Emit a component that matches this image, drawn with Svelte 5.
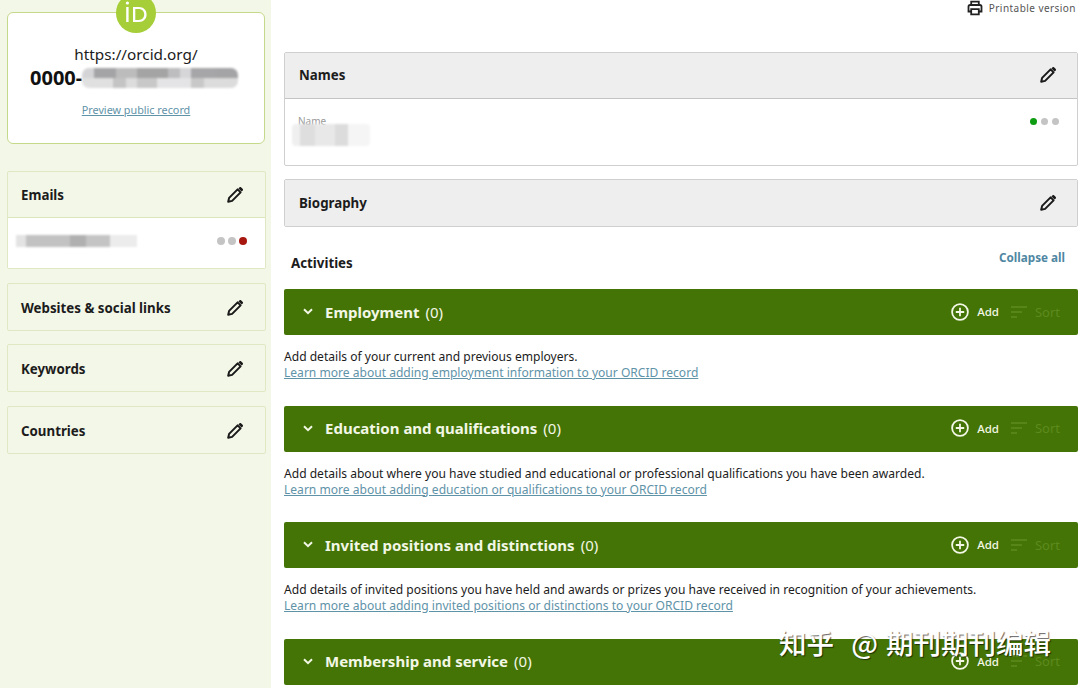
<script>
    const sideCards = ["Websites & social links", "Keywords", "Countries"];
    const sections = [
        {
            title: "Employment",
            text: "Add details of your current and previous employers.",
            link: "Learn more about adding employment information to your ORCID record",
        },
        {
            title: "Education and qualifications",
            text: "Add details about where you have studied and educational or professional qualifications you have been awarded.",
            link: "Learn more about adding education or qualifications to your ORCID record",
        },
        {
            title: "Invited positions and distinctions",
            text: "Add details of invited positions you have held and awards or prizes you have received in recognition of your achievements.",
            link: "Learn more about adding invited positions or distinctions to your ORCID record",
        },
        { title: "Membership and service" },
    ];
</script>

{#snippet pencil()}
    <svg class="pencil" viewBox="0 0 18 18" width="18" height="18" aria-hidden="true">
        <path d="M2.2 15.8l.9-3.9L11.6 3.4l3 3-8.5 8.5z" fill="none" stroke="#1a1a1a" stroke-width="2" stroke-linejoin="round" />
        <path d="M12.4 2.4l1.2-1.2c.4-.4 1-.4 1.4 0l1.8 1.8c.4.4.4 1 0 1.4l-1.2 1.2z" fill="#1a1a1a" />
    </svg>
{/snippet}

<div class="page">
    <aside class="sidebar">
        <div class="id-card">
            <svg class="id-logo" viewBox="0 0 40 40" width="40" height="40" aria-hidden="true">
                <circle cx="20" cy="20" r="20" fill="#a6ce39" />
                <rect x="10.2" y="14" width="2.4" height="15" fill="#fff" />
                <circle cx="11.4" cy="10" r="1.6" fill="#fff" />
                <path d="M17 14h5.8c4.9 0 7.8 3.3 7.8 7.5s-3 7.5-7.8 7.5H17zM19.3 16.1v10.8h3.4c3.6 0 5.5-2.5 5.5-5.4s-1.9-5.4-5.5-5.4z" fill="#fff" />
            </svg>
            <div class="id-url">https://orcid.org/</div>
            <div class="id-number">0000-<span class="blur-id"></span></div>
            <a class="preview" href="#preview">Preview public record</a>
        </div>

        <div class="side-card emails">
            <div class="side-head">
                <span>Emails</span>
                {@render pencil()}
            </div>
            <div class="side-body">
                <span class="blur-email"></span>
                <span class="dots">
                    <i></i><i></i><i class="red"></i>
                </span>
            </div>
        </div>

        {#each sideCards as card}
            <div class="side-card">
                <div class="side-head">
                    <span>{card}</span>
                    {@render pencil()}
                </div>
            </div>
        {/each}
    </aside>

    <main class="content">
        <div class="print-row">
            <svg viewBox="0 0 16 16" width="16" height="16" aria-hidden="true">
                <path d="M4.2 5V1.6h7.6V5M4 11.5H1.5V6.6c0-.9.7-1.6 1.6-1.6h9.8c.9 0 1.6.7 1.6 1.6v4.9H12M4.2 9.2h7.6v5.2H4.2z" fill="none" stroke="#222" stroke-width="1.8" />
            </svg>
            <span>Printable version</span>
        </div>

        <section class="panel names">
            <div class="panel-head">
                <span>Names</span>
                {@render pencil()}
            </div>
            <div class="panel-body">
                <div class="name-col">
                    <span class="name-label">Name</span>
                    <span class="blur-name"></span>
                </div>
                <span class="dots small">
                    <i class="green"></i><i></i><i></i>
                </span>
            </div>
        </section>

        <section class="panel">
            <div class="panel-head">
                <span>Biography</span>
                {@render pencil()}
            </div>
        </section>

        <div class="activities">
            <span class="act-title">Activities</span>
            <a class="collapse" href="#collapse">Collapse all</a>
        </div>

        {#each sections as s}
            <section class="activity">
                <div class="bar">
                    <svg class="chev" viewBox="0 0 10 7" width="10" height="7" aria-hidden="true">
                        <path d="M1 1.2l4 4 4-4" fill="none" stroke="#f2f7e6" stroke-width="2" />
                    </svg>
                    <span class="bar-title">{s.title}</span>
                    <span class="bar-count">(0)</span>
                    <span class="bar-actions">
                        <svg viewBox="0 0 18 18" width="18" height="18" aria-hidden="true">
                            <circle cx="9" cy="9" r="7.9" fill="none" stroke="#f2f7e6" stroke-width="1.8" />
                            <path d="M9 4.8v8.4M4.8 9h8.4" stroke="#f2f7e6" stroke-width="1.8" />
                        </svg>
                        <span class="add">Add</span>
                        <svg class="sort-icon" viewBox="0 0 16 12" width="16" height="12" aria-hidden="true">
                            <path d="M0 1h16M0 6h11M0 11h6" stroke="#5d8a1f" stroke-width="1.5" />
                        </svg>
                        <span class="sort">Sort</span>
                    </span>
                </div>
                {#if s.text}
                    <div class="notes">
                        <p>{s.text}</p>
                        <a href="#learn">{s.link}</a>
                    </div>
                {/if}
            </section>
        {/each}
    </main>

    <div class="watermark">知乎 <span class="at">@</span>期刊期刊编辑</div>
</div>

<style>
    :global(body) {
        margin: 0;
        background: #fff;
    }
    .page {
        position: relative;
        display: flex;
        width: 1080px;
        height: 688px;
        overflow: hidden;
        font-family: "Noto Sans", sans-serif;
        color: #1c1c1c;
    }
    .sidebar {
        width: 271px;
        flex: none;
        box-sizing: border-box;
        padding: 12px 5px 0 7px;
        background: #f3f7e7;
    }
    .id-card {
        position: relative;
        box-sizing: border-box;
        width: 258px;
        height: 132px;
        margin-bottom: 27px;
        padding-top: 31px;
        background: #fff;
        border: 1px solid #c5d98b;
        border-radius: 6px;
        text-align: center;
    }
    .id-logo {
        position: absolute;
        left: 108px;
        top: -20px;
    }
    .id-url {
        font-size: 15.3px;
        line-height: 20px;
    }
    .id-number {
        display: flex;
        align-items: center;
        margin: 0 0 0 22px;
        font-size: 20px;
        line-height: 27px;
        font-weight: 700;
        color: #111;
    }
    .blur-id {
        width: 156px;
        height: 20px;
        border-radius: 7px;
        background:
            linear-gradient(90deg, #d4d4d6 0 8%, #a4a4a6 8% 22%, #bcbcbc 22% 35%, #a4a4a4 35% 55%, #bdbdbf 55% 63%, #d6d6d8 63% 70%, #a6a6a8 70% 86%, #a4a4a6 86% 100%) top / 100% 50% no-repeat,
            linear-gradient(90deg, #e0e0e0 0 20%, #c4c4c4 20% 28%, #dcdcdc 28% 35%, #c8c8c8 35% 48%, #e4e4e6 48% 70%, #c8c8c8 70% 78%, #dcdcdc 78% 100%) bottom / 100% 50% no-repeat;
        filter: blur(1px);
    }
    .preview {
        display: block;
        margin-top: 12px;
        font-size: 10.8px;
        line-height: 14px;
        color: #5f93a8;
    }
    .side-card {
        margin-bottom: 13.5px;
        border: 1px solid #dfe8c2;
        border-radius: 2px;
    }
    .side-head {
        display: flex;
        align-items: center;
        justify-content: space-between;
        box-sizing: border-box;
        height: 46px;
        padding: 2px 21px 0 13px;
        font-size: 13.3px;
        font-weight: 700;
    }
    .emails .side-head {
        padding-top: 0;
        border-bottom: 1px solid #dbe6b9;
    }
    .side-body {
        display: flex;
        align-items: flex-start;
        justify-content: space-between;
        box-sizing: border-box;
        height: 50px;
        padding: 17px 18px 0 8px;
        background: #fff;
    }
    .blur-email {
        width: 121px;
        height: 12px;
        background: linear-gradient(90deg, #e3e3e3 0 8%, #c2c2c2 8% 45%, #b0b0b0 45% 58%, #c4c4c4 58% 78%, #ececec 78% 100%);
        filter: blur(1px);
    }
    .dots {
        display: flex;
        gap: 3px;
    }
    .dots i {
        width: 8px;
        height: 8px;
        border-radius: 50%;
        background: #c4c4c4;
    }
    .dots .red {
        background: #a8170f;
    }
    .dots .green {
        background: #0d9c12;
    }
    .side-body .dots {
        margin-top: 2px;
    }
    .dots.small {
        gap: 4px;
        height: 7px;
        margin-top: 3px;
    }
    .dots.small i {
        width: 7px;
        height: 7px;
    }
    .pencil {
        flex: none;
    }
    .content {
        flex: 1;
        box-sizing: border-box;
        padding: 0 2px 0 13px;
    }
    .print-row {
        display: flex;
        align-items: center;
        justify-content: flex-end;
        gap: 6px;
        height: 16px;
        margin-bottom: 36px;
        padding-right: 2px;
        font-size: 10px;
        letter-spacing: 0.45px;
        color: #555;
    }
    .panel {
        margin-bottom: 13px;
        border: 1px solid #cfcfcf;
        border-radius: 2px;
    }
    .panel-head {
        display: flex;
        align-items: center;
        justify-content: space-between;
        box-sizing: border-box;
        height: 46px;
        padding: 0 20px 0 14px;
        background: #eee;
        font-size: 13.3px;
        font-weight: 700;
    }
    .names .panel-head {
        padding-bottom: 2px;
        border-bottom: 1px solid #c4c4c4;
    }
    .panel-body {
        display: flex;
        justify-content: space-between;
        box-sizing: border-box;
        height: 66px;
        padding: 16px 18px 0 13px;
    }
    .name-col {
        display: flex;
        flex-direction: column;
    }
    .name-label {
        font-size: 10px;
        line-height: 12px;
        color: #999;
    }
    .blur-name {
        width: 78px;
        height: 22px;
        margin: -3px 0 0 -6px;
        border-radius: 4px;
        background: linear-gradient(90deg, #efefef 0 10%, #dedede 10% 30%, #e8e8e8 30% 55%, #dcdcdc 55% 72%, #f5f5f5 72% 100%);
        filter: blur(1px);
    }
    .activities {
        display: flex;
        justify-content: space-between;
        box-sizing: border-box;
        height: 49px;
        padding: 9px 13px 0 7px;
    }
    .act-title {
        margin-top: 5px;
        font-size: 13.3px;
        font-weight: 700;
        line-height: 18px;
    }
    .collapse {
        font-size: 11.7px;
        font-weight: 700;
        line-height: 16px;
        color: #4f87a3;
        text-decoration: none;
    }
    .activity {
        height: 116.5px;
    }
    .bar {
        display: flex;
        align-items: center;
        box-sizing: border-box;
        height: 46px;
        padding: 0 0 1px 19px;
        background: #447405;
        border-radius: 2px;
        color: #f2f7e6;
    }
    .chev {
        margin-right: 12px;
    }
    .bar-title {
        font-size: 15px;
        font-weight: 700;
    }
    .bar-count {
        margin-left: 6px;
        font-size: 15px;
    }
    .bar-actions {
        display: flex;
        align-items: center;
        margin-left: auto;
        padding-right: 18px;
    }
    .add {
        margin: 0 12px 0 8px;
        font-size: 11.5px;
        font-weight: 500;
    }
    .sort {
        margin-left: 8px;
        font-size: 13px;
        color: #5d8a1f;
    }
    .notes {
        padding-top: 14px;
        font-size: 12.07px;
        line-height: 16px;
    }
    .notes p {
        margin: 0;
    }
    .notes a {
        color: #5f93a8;
    }
    .watermark {
        position: absolute;
        left: 779px;
        top: 624px;
        font-family: "Noto Sans CJK SC", sans-serif;
        font-size: 27.5px;
        font-weight: 500;
        line-height: 36px;
        color: #fff;
        text-shadow: 1px 1px 1px rgba(0, 0, 0, 0.6);
        word-spacing: 11px;
        white-space: nowrap;
    }
    .at {
        margin-right: 8px;
    }
</style>
